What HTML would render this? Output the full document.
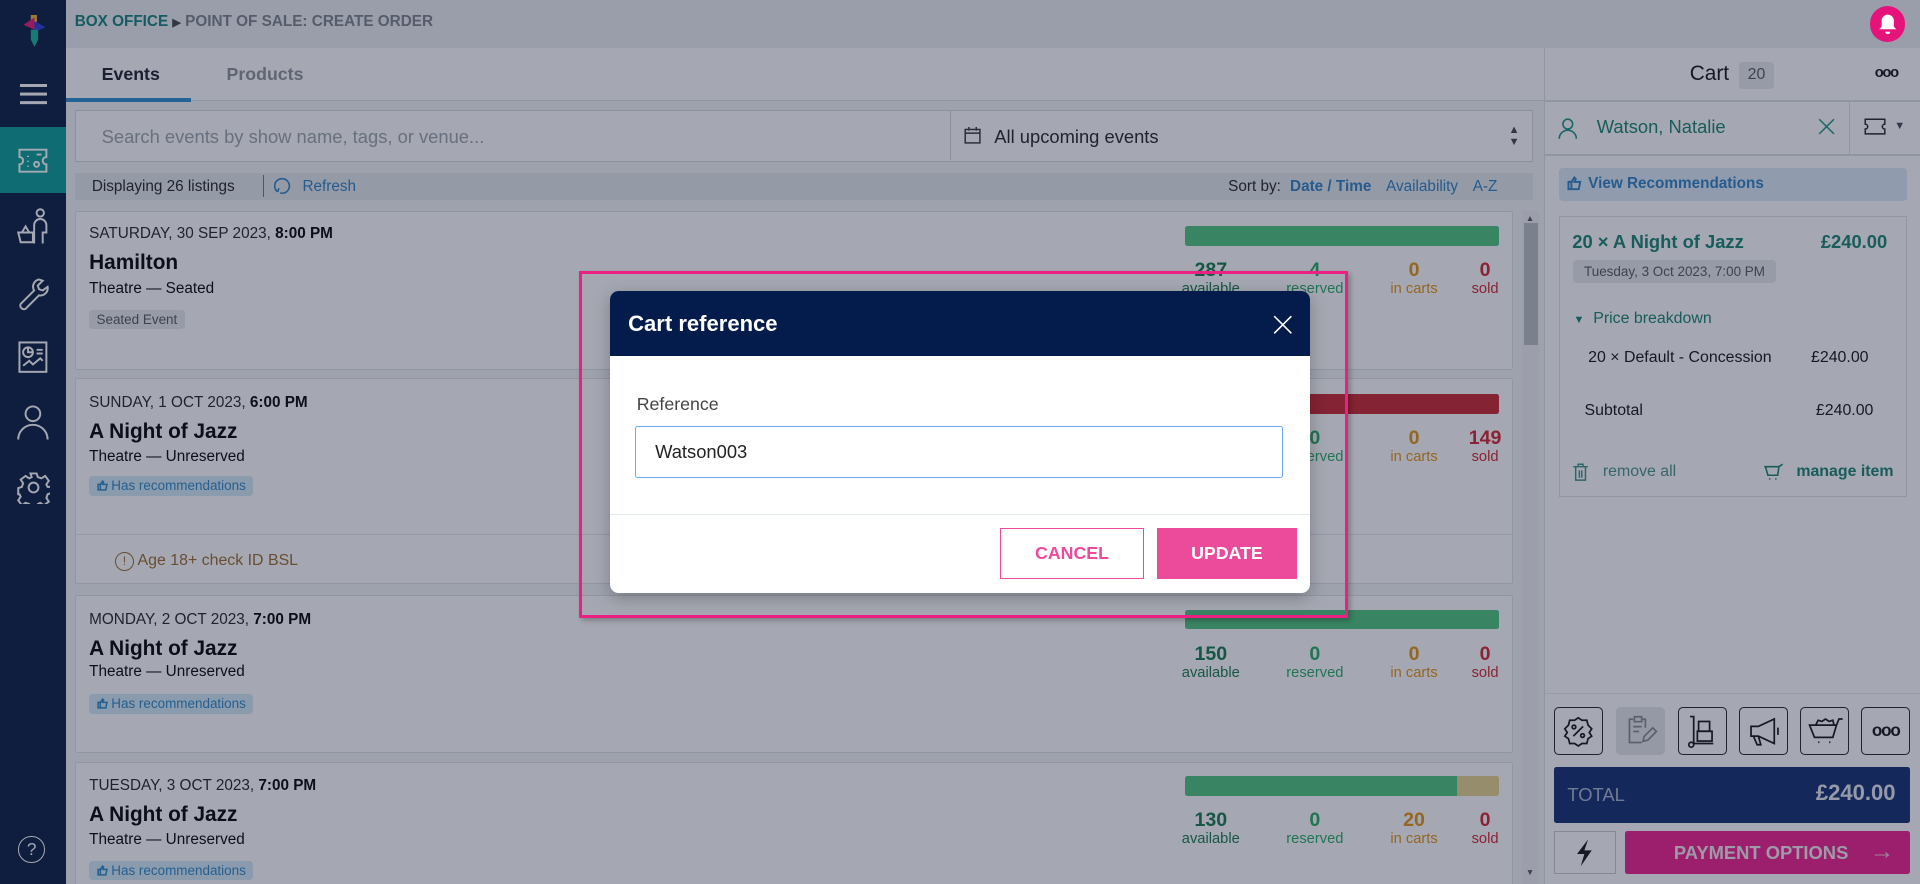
<!DOCTYPE html>
<html><head><meta charset="utf-8">
<style>
html{zoom:1.22449;background:#a5a8b1;overflow:hidden}
body{margin:0;width:1568px;height:722px;overflow:hidden;position:relative;font-family:"Liberation Sans",sans-serif;background:#f4f5f7;color:#111}
.a{position:absolute}
.side{left:0;top:0;width:54px;height:722px;background:#061a3e}
.card{position:absolute;left:61px;width:1175px;background:#fff;border:1px solid #dfe2e6;border-radius:2px;box-sizing:border-box}
.date{position:absolute;left:11px;font-size:12.5px;color:#222}
.date b{color:#000}
.ttl{position:absolute;left:11px;font-size:17px;font-weight:bold;color:#000}
.sub{position:absolute;left:11px;font-size:12.5px;color:#000}
.tag{position:absolute;left:11px;height:16px;line-height:16px;padding:0 6px;font-size:11px;border-radius:3px}
.tag.g{background:#e8eaee;color:#555}
.tag.b{background:#d3e9f7;color:#2a86c7}
.tag svg,.th{vertical-align:-1px}
.bar{position:absolute;left:906px;width:256px;height:16px;border-radius:2px}
.st{position:absolute;text-align:center;width:70px}
.st .n{font-size:16px;font-weight:bold;line-height:18px}
.st .l{font-size:12px;line-height:14px}
.av{color:#13774a}.rs{color:#25a862}.ic{color:#e3920d}.sd{color:#d4202f}
.ov{left:0;top:0;width:1568px;height:740px;background:rgba(30,38,62,0.4);z-index:10}
.ib{position:absolute;top:577px;width:40px;height:40px;border:1px solid #222;border-radius:4px;box-sizing:border-box;background:#fff}
</style></head><body>

<div class="a side">
 <svg class="a" style="left:17px;top:12px" width="22" height="28" viewBox="0 0 22 28"><path d="M8 0h5v6H8z" fill="#f3b52a"/><path d="M2 8l9-6v10z" fill="#e6147a"/><path d="M11 5l9 5-9 4z" fill="#2b3ad8"/><path d="M8 12h6v8l-3 6-3-6z" fill="#14b39d"/></svg>
 <div class="a" style="left:16px;top:69px;width:22px;height:2px;background:#fff;box-shadow:0 7px 0 #fff,0 14px 0 #fff"></div>
 <div class="a" style="left:0;top:104px;width:54px;height:54px;background:#079c96"></div>
 <svg class="a" style="left:14px;top:119px" width="26" height="24" viewBox="0 0 26 24" fill="none" stroke="#fff" stroke-width="1.6"><path d="M2 3h22v6a3 3 0 0 0 0 6v6H2v-6a3 3 0 0 0 0-6z"/><circle cx="16" cy="15" r="2"/><path d="M9 8v1M9 12v1M9 16v1M16 7h4"/></svg>
 <svg class="a" style="left:14px;top:170px" width="26" height="30" viewBox="0 0 26 30" fill="none" stroke="#fff" stroke-width="1.6"><circle cx="19" cy="4" r="3"/><path d="M14 29V14a5 5 0 0 1 10 0v6h-3v9"/><path d="M1 20h12v8H3zM4 20l3-5 3 5"/></svg>
 <svg class="a" style="left:14px;top:226px" width="26" height="28" viewBox="0 0 26 28" fill="none" stroke="#fff" stroke-width="1.6"><path d="M18 2a6 6 0 0 0-4 9L3 22a3 3 0 0 0 4 4l11-11a6 6 0 0 0 7-7l-4 3-3-1-1-3 4-4z"/></svg>
 <svg class="a" style="left:14px;top:278px" width="26" height="28" viewBox="0 0 26 28" fill="none" stroke="#fff" stroke-width="1.6"><rect x="2" y="2" width="22" height="24"/><circle cx="9" cy="10" r="4"/><path d="M9 6v4h4M16 8h5M16 11h5M5 21l5-4 3 3 6-5 2 2"/></svg>
 <svg class="a" style="left:14px;top:330px" width="26" height="30" viewBox="0 0 26 30" fill="none" stroke="#fff" stroke-width="1.6"><circle cx="13" cy="8" r="6"/><path d="M1 29a12 12 0 0 1 24 0"/></svg>
 <svg class="a" style="left:14px;top:385px" width="27" height="27" viewBox="0 0 27 27" fill="none" stroke="#fff" stroke-width="1.6"><circle cx="13.5" cy="13.5" r="4"/><path d="M11 2h5l1 3 3 1 3-2 3 4-2 3 1 2h3v5l-3 1-1 3 2 3-4 3-3-2-2 1-1 3h-5l-1-3-3-1-3 2-3-4 2-3-1-2H1v-5l3-1 1-3-2-3 4-3 3 2 2-1z"/></svg>
 <div class="a" style="left:15px;top:683px;width:20px;height:20px;border:1.5px solid #fff;border-radius:50%;color:#fff;font-size:14px;text-align:center;line-height:20px">?</div>
</div>

<div class="a" style="left:54px;top:0;width:1514px;height:39px;background:#eceef2"></div>
<div class="a" style="left:61px;top:11px;font-size:12.5px;font-weight:bold;color:#0e8078">BOX OFFICE <span style="color:#444;font-size:9px">▶</span> <span style="color:#7c8189">POINT OF SALE: CREATE ORDER</span></div>

<div class="a" style="left:54px;top:39px;width:1207px;height:43px;background:#fff;border-bottom:1px solid #dde0e4"></div>
<div class="a" style="left:83px;top:52px;font-size:14.5px;font-weight:bold;color:#1a1f2b">Events</div>
<div class="a" style="left:185px;top:52px;font-size:14.5px;font-weight:bold;color:#8a8f98">Products</div>
<div class="a" style="left:54px;top:80px;width:102px;height:3px;background:#2b8dd0"></div>

<div class="a" style="left:61px;top:90px;width:1191px;height:42px;background:#fff;border:1px solid #d4d7dc;box-sizing:border-box"></div>
<div class="a" style="left:83px;top:103px;font-size:15px;color:#9aa0a8">Search events by show name, tags, or venue...</div>
<div class="a" style="left:776px;top:91px;width:1px;height:40px;background:#d4d7dc"></div>
<svg class="a" style="left:787px;top:104px" width="14" height="14" viewBox="0 0 14 14" fill="none" stroke="#333" stroke-width="1.2"><rect x="1" y="2" width="12" height="11"/><path d="M1 5h12M4 0v3M10 0v3"/></svg>
<div class="a" style="left:812px;top:103px;font-size:15px;color:#222">All upcoming events</div>
<div class="a" style="left:1232px;top:101px;font-size:9px;color:#444;line-height:10px">▲<br>▼</div>

<div class="a" style="left:61px;top:141px;width:1191px;height:22px;background:#e5e8ed"></div>
<div class="a" style="left:75px;top:145px;font-size:12.5px;color:#222">Displaying 26 listings</div>
<div class="a" style="left:215px;top:143px;width:1px;height:18px;background:#777"></div>
<svg class="a" style="left:224px;top:144px" width="16" height="16" viewBox="0 0 16 16" fill="none" stroke="#2b7fc4" stroke-width="1.3"><path d="M3 13A6 6 0 1 1 8 14H5M3 13l1-3"/></svg>
<div class="a" style="left:247px;top:145px;font-size:12.5px;color:#2b7fc4">Refresh</div>
<div class="a" style="left:1003px;top:145px;font-size:12.5px;color:#222">Sort by: <b style="color:#2b7fc4;margin-left:4px">Date / Time</b><span style="color:#2b7fc4;margin-left:12px">Availability</span><span style="color:#2b7fc4;margin-left:12px">A-Z</span></div>

<div class="card" style="top:172px;height:130px">
 <div class="date" style="top:11px">SATURDAY, 30 SEP 2023, <b>8:00 PM</b></div>
 <div class="ttl" style="top:32px">Hamilton</div>
 <div class="sub" style="top:56px">Theatre — Seated</div>
 <div class="tag g" style="top:80px">Seated Event</div>
 <div class="bar" style="top:12px;background:#4cc47c"></div>
 <div class="st" style="left:892px;top:39px"><div class="n av">287</div><div class="l av">available</div></div>
 <div class="st" style="left:977px;top:39px"><div class="n rs">4</div><div class="l rs">reserved</div></div>
 <div class="st" style="left:1058px;top:39px"><div class="n ic">0</div><div class="l ic">in carts</div></div>
 <div class="st" style="left:1116px;top:39px"><div class="n sd">0</div><div class="l sd">sold</div></div>
</div>
<div class="card" style="top:309px;height:168px">
 <div class="date" style="top:12px">SUNDAY, 1 OCT 2023, <b>6:00 PM</b></div>
 <div class="ttl" style="top:33px">A Night of Jazz</div>
 <div class="sub" style="top:56px">Theatre — Unreserved</div>
 <div class="tag b" style="top:79px"><svg width="9" height="9" viewBox="0 0 10 10" fill="none" stroke="#2a86c7" stroke-width="1.4"><path d="M1 4h2v5H1zM3 4l2-3 1 1-1 2h4l-1 5H3"/></svg> Has recommendations</div>
 <div class="a" style="left:0;top:126px;width:1173px;height:1px;background:#e6e8eb"></div>
 <div class="a" style="left:32px;top:141px;font-size:13px;color:#9a6a2a"><span style="display:inline-block;width:14px;height:14px;border:1px solid #9a6a2a;border-radius:50%;text-align:center;line-height:14px;font-size:10px">!</span> Age 18+ check ID BSL</div>
 <div class="bar" style="top:12px;background:#c8222e"></div>
 <div class="st" style="left:977px;top:39px"><div class="n rs">0</div><div class="l rs">reserved</div></div>
 <div class="st" style="left:1058px;top:39px"><div class="n ic">0</div><div class="l ic">in carts</div></div>
 <div class="st" style="left:1116px;top:39px"><div class="n sd">149</div><div class="l sd">sold</div></div>
</div>
<div class="card" style="top:486px;height:129px">
 <div class="date" style="top:12px">MONDAY, 2 OCT 2023, <b>7:00 PM</b></div>
 <div class="ttl" style="top:33px">A Night of Jazz</div>
 <div class="sub" style="top:55px">Theatre — Unreserved</div>
 <div class="tag b" style="top:80px"><svg width="9" height="9" viewBox="0 0 10 10" fill="none" stroke="#2a86c7" stroke-width="1.4"><path d="M1 4h2v5H1zM3 4l2-3 1 1-1 2h4l-1 5H3"/></svg> Has recommendations</div>
 <div class="bar" style="top:11px;background:#4cc47c"></div>
 <div class="st" style="left:892px;top:38px"><div class="n av">150</div><div class="l av">available</div></div>
 <div class="st" style="left:977px;top:38px"><div class="n rs">0</div><div class="l rs">reserved</div></div>
 <div class="st" style="left:1058px;top:38px"><div class="n ic">0</div><div class="l ic">in carts</div></div>
 <div class="st" style="left:1116px;top:38px"><div class="n sd">0</div><div class="l sd">sold</div></div>
</div>
<div class="card" style="top:622px;height:110px">
 <div class="date" style="top:12px">TUESDAY, 3 OCT 2023, <b>7:00 PM</b></div>
 <div class="ttl" style="top:33px">A Night of Jazz</div>
 <div class="sub" style="top:56px">Theatre — Unreserved</div>
 <div class="tag b" style="top:80px"><svg width="9" height="9" viewBox="0 0 10 10" fill="none" stroke="#2a86c7" stroke-width="1.4"><path d="M1 4h2v5H1zM3 4l2-3 1 1-1 2h4l-1 5H3"/></svg> Has recommendations</div>
 <div class="bar" style="top:11px;background:linear-gradient(90deg,#4cc47c 0 222px,#e6d38a 222px)"></div>
 <div class="st" style="left:892px;top:38px"><div class="n av">130</div><div class="l av">available</div></div>
 <div class="st" style="left:977px;top:38px"><div class="n rs">0</div><div class="l rs">reserved</div></div>
 <div class="st" style="left:1058px;top:38px"><div class="n ic">20</div><div class="l ic">in carts</div></div>
 <div class="st" style="left:1116px;top:38px"><div class="n sd">0</div><div class="l sd">sold</div></div>
</div>
<div class="a" style="left:1243px;top:172px;width:14px;height:560px;background:#f0f1f3"></div>
<div class="a" style="left:1245px;top:182px;width:11px;height:100px;background:#b9bcc2"></div>
<div class="a" style="left:1246px;top:174px;font-size:7px;color:#555">▲</div>
<div class="a" style="left:1246px;top:708px;font-size:7px;color:#555">▼</div>

<div class="a" style="left:1261px;top:39px;width:307px;height:693px;background:#fff;border-left:1px solid #dde0e4"></div>
<div class="a" style="left:1261px;top:82px;width:307px;height:1px;background:#dde0e4"></div>
<div class="a" style="left:1380px;top:51px;font-size:17px;color:#111">Cart</div>
<div class="a" style="left:1420px;top:51px;width:29px;height:22px;background:#e8eaed;border-radius:3px;text-align:center;line-height:22px;font-size:13px;color:#555">20</div>
<div class="a" style="left:1531px;top:53px;font-size:12px;font-weight:bold;letter-spacing:-1px;color:#111">ooo</div>
<div class="a" style="left:1261px;top:126px;width:307px;height:1px;background:#dde0e4"></div>
<div class="a" style="left:1510px;top:83px;width:1px;height:43px;background:#dde0e4"></div>
<svg class="a" style="left:1272px;top:96px" width="16" height="18" viewBox="0 0 16 18" fill="none" stroke="#14917f" stroke-width="1.3"><circle cx="8" cy="5" r="4"/><path d="M1 17a7 7 0 0 1 14 0"/></svg>
<div class="a" style="left:1304px;top:95px;font-size:15px;color:#14806f">Watson, Natalie</div>
<svg class="a" style="left:1485px;top:96px" width="14" height="14" viewBox="0 0 14 14" stroke="#14917f" stroke-width="1.2"><path d="M1 1l12 12M13 1L1 13"/></svg>
<svg class="a" style="left:1522px;top:96px" width="18" height="14" viewBox="0 0 18 14" fill="none" stroke="#222" stroke-width="1.2"><path d="M1 1h16v4a2 2 0 0 0 0 4v4H1V9a2 2 0 0 0 0-4z"/></svg>
<div class="a" style="left:1547px;top:98px;font-size:9px;color:#445">▼</div>

<div class="a" style="left:1273px;top:137px;width:284px;height:27px;background:#dcecf8;border-radius:3px"></div>
<svg class="a" style="left:1280px;top:144px" width="12" height="12" viewBox="0 0 10 10" fill="none" stroke="#2b7fc4" stroke-width="1.3"><path d="M1 4h2v5H1zM3 4l2-3 1 1-1 2h4l-1 5H3"/></svg>
<div class="a" style="left:1297px;top:143px;font-size:12.5px;font-weight:bold;color:#2b7fc4">View Recommendations</div>

<div class="a" style="left:1273px;top:176px;width:284px;height:230px;border:1px solid #dfe2e6;box-sizing:border-box"></div>
<div class="a" style="left:1284px;top:189px;font-size:15px;font-weight:bold;color:#14806f">20 × A Night of Jazz</div>
<div class="a" style="left:1487px;top:189px;font-size:15px;font-weight:bold;color:#14806f">£240.00</div>
<div class="a" style="left:1285px;top:212px;width:165px;height:19px;background:#e8eaee;border-radius:3px;font-size:11px;color:#555;line-height:19px;text-align:center">Tuesday, 3 Oct 2023, 7:00 PM</div>
<div class="a" style="left:1285px;top:253px;font-size:13px;color:#14806f"><span style="font-size:9px">▼</span>&nbsp; Price breakdown</div>
<div class="a" style="left:1297px;top:285px;font-size:13px;color:#111">20 × Default - Concession</div>
<div class="a" style="left:1479px;top:285px;font-size:13px;color:#111">£240.00</div>
<div class="a" style="left:1294px;top:328px;font-size:13px;color:#111">Subtotal</div>
<div class="a" style="left:1483px;top:328px;font-size:13px;color:#111">£240.00</div>
<svg class="a" style="left:1284px;top:378px" width="14" height="15" viewBox="0 0 14 15" fill="none" stroke="#3a8f86" stroke-width="1.2"><path d="M1 3h12M5 3V1h4v2M3 3v11h8V3M6 6v6M8 6v6"/></svg>
<div class="a" style="left:1309px;top:378px;font-size:13px;color:#4a8f88">remove all</div>
<svg class="a" style="left:1440px;top:378px" width="17" height="15" viewBox="0 0 17 15" fill="none" stroke="#14806f" stroke-width="1.3"><path d="M1 3h12l3-2M2 3l2 7h8l1-7M5 13h1M10 13h1"/></svg>
<div class="a" style="left:1467px;top:378px;font-size:13px;font-weight:bold;color:#14806f">manage item</div>

<div class="a" style="left:1261px;top:566px;width:307px;height:1px;background:#e8eaed"></div>
<div class="ib" style="left:1269px"><svg width="38" height="38" viewBox="0 0 38 38" fill="none" stroke="#111" stroke-width="1.4"><path d="M19 8l3 2 4 0 1 4 3 3-2 3 2 3-3 2-1 4-4 0-3 2-3-2-4 0-1-4-3-2 2-3-2-3 3-3 1-4 4 0z"/><path d="M15 23l8-8"/><circle cx="15.5" cy="15.5" r="1.5"/><circle cx="22.5" cy="22.5" r="1.5"/></svg></div>
<div class="ib" style="left:1320px;border:none;background:#e4e6ea"><svg width="38" height="38" viewBox="0 0 38 38" fill="none" stroke="#888" stroke-width="1.4"><path d="M14 10h-3v19h10M24 17v-7h-3M15 8h6v4h-6zM14 16h7M14 20h5"/><path d="M22 28l1-4 7-7 3 3-7 7z"/></svg></div>
<div class="ib" style="left:1370px"><svg width="38" height="38" viewBox="0 0 38 38" fill="none" stroke="#111" stroke-width="1.4"><path d="M9 7h3v22M12 29h16"/><circle cx="10" cy="30" r="2"/><rect x="16" y="11" width="9" height="8"/><rect x="15" y="19" width="12" height="8"/></svg></div>
<div class="ib" style="left:1420px"><svg width="38" height="38" viewBox="0 0 38 38" fill="none" stroke="#111" stroke-width="1.4"><path d="M9 15h6l13-6v20l-13-6H9zM11 23l3 7h3l-2-7M31 16v6"/></svg></div>
<div class="ib" style="left:1470px"><svg width="38" height="38" viewBox="0 0 38 38" fill="none" stroke="#111" stroke-width="1.4"><path d="M7 14h22l-3 10H11zM29 14l2-5h3M14 28h1M23 28h1M12 14l2-4 3 1 3-2 3 2 3-1 1 4"/></svg></div>
<div class="ib" style="left:1520px"><div style="font-size:14px;font-weight:bold;text-align:center;line-height:36px;letter-spacing:-1px">ooo</div></div>
<div class="a" style="left:1269px;top:626px;width:291px;height:46px;background:#0f2a6e;border-radius:2px"></div>
<div class="a" style="left:1280px;top:640px;font-size:15px;color:#a9b4cc">TOTAL</div>
<div class="a" style="left:1483px;top:637px;font-size:18px;font-weight:bold;color:#e6e8ee">£240.00</div>
<div class="a" style="left:1269px;top:679px;width:51px;height:35px;border:1px solid #ccc;box-sizing:border-box;background:#fff"><svg width="49" height="33" viewBox="0 0 49 33"><path d="M27 6l-9 12h6l-3 10 9-13h-6z" fill="#111"/></svg></div>
<div class="a" style="left:1327px;top:679px;width:233px;height:35px;background:#ee1c8b;border-radius:2px"></div>
<div class="a" style="left:1367px;top:688px;font-size:15px;font-weight:bold;color:#f4e8ef">PAYMENT OPTIONS</div>
<div class="a" style="left:1527px;top:684px;font-size:20px;color:#f0c4da">→</div>

<div class="a ov"></div>

<div class="a" style="left:1527px;top:5px;width:29px;height:29px;border-radius:50%;background:#e6147a;z-index:20"><svg width="29" height="29" viewBox="0 0 29 29"><path d="M14.5 7a5 5 0 0 0-5 5v5l-2 2h14l-2-2v-5a5 5 0 0 0-5-5zM12.5 21a2 2 0 0 0 4 0z" fill="#fff"/></svg></div>

<div class="a" style="left:473px;top:221px;width:628px;height:284px;border:3px solid #ec1f82;box-sizing:border-box;z-index:20;box-shadow:2px 2px 4px rgba(0,0,0,.25)"></div>
<div class="a" style="left:498px;top:238px;width:572px;height:246px;background:#fff;border-radius:7px;z-index:21;overflow:hidden;box-shadow:0 4px 14px rgba(0,0,0,.25)">
 <div class="a" style="left:0;top:0;width:572px;height:53px;background:#041c4b"></div>
 <div class="a" style="left:15px;top:16px;font-size:18px;font-weight:bold;color:#fff">Cart reference</div>
 <svg class="a" style="left:542px;top:19px" width="16" height="16" viewBox="0 0 16 16" stroke="#fff" stroke-width="1.3"><path d="M1 1l14 14M15 1L1 15"/></svg>
 <div class="a" style="left:22px;top:84px;font-size:14.5px;color:#444">Reference</div>
 <div class="a" style="left:21px;top:110px;width:529px;height:42px;border:1px solid #6aaaf2;box-sizing:border-box;border-radius:2px"></div>
 <div class="a" style="left:37px;top:122px;font-size:15px;color:#222">Watson003</div>
 <div class="a" style="left:0;top:182px;width:572px;height:1px;background:#e2e8f0"></div>
 <div class="a" style="left:319px;top:193px;width:117px;height:42px;border:1px solid #ec4a9a;box-sizing:border-box;text-align:center;line-height:40px;font-size:14.5px;font-weight:bold;color:#ec4a9a">CANCEL</div>
 <div class="a" style="left:447px;top:193px;width:114px;height:42px;background:#ec4a9a;text-align:center;line-height:42px;font-size:14.5px;font-weight:bold;color:#fff">UPDATE</div>
</div>
</body></html>
